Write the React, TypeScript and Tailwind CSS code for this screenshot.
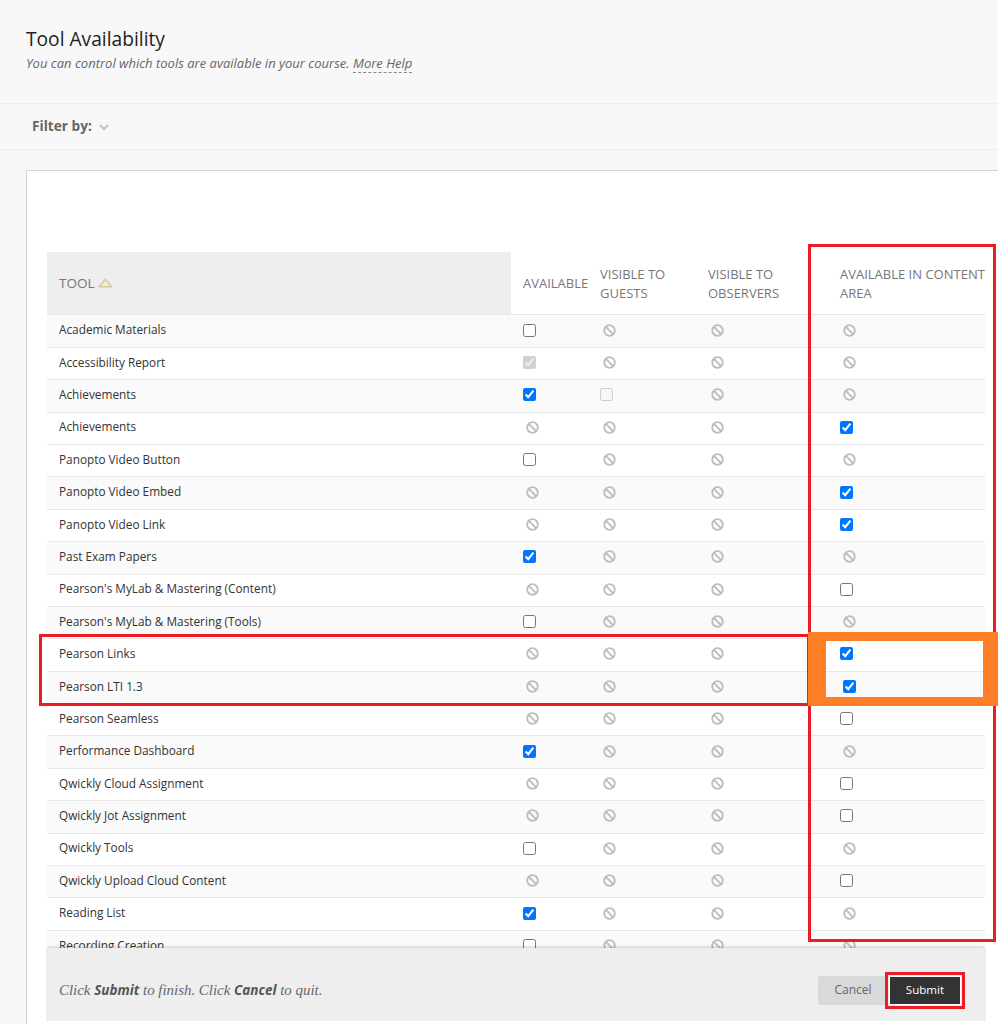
import React from 'react';

type Cell = 'empty' | 'checked' | 'no' | 'lockedOn' | 'lockedOff';

const rows: { name: string; cells: Cell[] }[] = [
  { name: 'Academic Materials', cells: ['empty', 'no', 'no', 'no'] },
  { name: 'Accessibility Report', cells: ['lockedOn', 'no', 'no', 'no'] },
  { name: 'Achievements', cells: ['checked', 'lockedOff', 'no', 'no'] },
  { name: 'Achievements', cells: ['no', 'no', 'no', 'checked'] },
  { name: 'Panopto Video Button', cells: ['empty', 'no', 'no', 'no'] },
  { name: 'Panopto Video Embed', cells: ['no', 'no', 'no', 'checked'] },
  { name: 'Panopto Video Link', cells: ['no', 'no', 'no', 'checked'] },
  { name: 'Past Exam Papers', cells: ['checked', 'no', 'no', 'no'] },
  { name: "Pearson's MyLab & Mastering (Content)", cells: ['no', 'no', 'no', 'empty'] },
  { name: "Pearson's MyLab & Mastering (Tools)", cells: ['empty', 'no', 'no', 'no'] },
  { name: 'Pearson Links', cells: ['no', 'no', 'no', 'checked'] },
  { name: 'Pearson LTI 1.3', cells: ['no', 'no', 'no', 'checked'] },
  { name: 'Pearson Seamless', cells: ['no', 'no', 'no', 'empty'] },
  { name: 'Performance Dashboard', cells: ['checked', 'no', 'no', 'no'] },
  { name: 'Qwickly Cloud Assignment', cells: ['no', 'no', 'no', 'empty'] },
  { name: 'Qwickly Jot Assignment', cells: ['no', 'no', 'no', 'empty'] },
  { name: 'Qwickly Tools', cells: ['empty', 'no', 'no', 'no'] },
  { name: 'Qwickly Upload Cloud Content', cells: ['no', 'no', 'no', 'empty'] },
  { name: 'Reading List', cells: ['checked', 'no', 'no', 'no'] },
  { name: 'Recording Creation', cells: ['empty', 'no', 'no', 'no'] },
];

function NoIcon() {
  return (
    <svg viewBox="0 0 13 13" className="ml-[3px] block h-[13px] w-[13px]" fill="none" stroke="#bcbcbc" strokeWidth="1.8">
      <circle cx="6.5" cy="6.5" r="5.3" />
      <path d="M2.7 2.7l7.6 7.6" />
    </svg>
  );
}

function ToolCell({ cell }: { cell: Cell }) {
  if (cell === 'no') return <NoIcon />;
  return (
    <input
      type="checkbox"
      readOnly
      checked={cell === 'checked' || cell === 'lockedOn'}
      disabled={cell === 'lockedOn' || cell === 'lockedOff'}
      className="block h-[13px] w-[13px]"
    />
  );
}

export default function App() {
  return (
    <div className="relative h-[1024px] w-[998px] overflow-hidden bg-[#f8f8f8] font-['Open_Sans',sans-serif]">
      {/* Page title */}
      <div className="h-[104px] border-b border-[#ececec] pl-[26px] pt-[25px]">
        <h1 className="text-[19.2px] leading-[27px] text-[#222]">Tool Availability</h1>
        <p className="text-[13.03px] leading-[23px] text-[#666] italic">
          You can control which tools are available in your course.{' '}
          <a className="border-b border-dashed border-[#888]">More Help</a>
        </p>
      </div>

      {/* Filter */}
      <div className="flex h-[46px] items-center gap-[7px] border-b border-[#ececec] pl-[32px]">
        <span className="text-[13.65px] font-bold text-[#666]">Filter by:</span>
        <svg viewBox="0 0 10 7" className="mt-[2px] h-[7px] w-[10px]" fill="none" stroke="#c4c4c4" strokeWidth="2">
          <path d="M1 1l4 4 4-4" />
        </svg>
      </div>

      {/* Card */}
      <div className="ml-[26px] mt-[20px] h-[900px] w-[1000px] border border-[#d4d4d4] bg-white pl-[20px] pt-[81px]">
        <div className="w-[938px]">
          <div className="grid h-[62.4px] grid-cols-[464px_77px_108px_132px_157px] items-center whitespace-nowrap text-[13px] leading-[19px] text-[#777]">
            <div className="flex h-full items-center gap-1 bg-[#eeeeee] pl-3 text-[13.5px]">
              TOOL
              <svg viewBox="0 0 15 10" className="h-[10px] w-[15px]">
                <path d="M7.5 1.2L13.8 8.8H1.2z" fill="#f5edc9" stroke="#d2c9a4" strokeWidth="1.4" strokeLinejoin="round" />
              </svg>
            </div>
            <div className="pl-3 pt-[1px]">AVAILABLE</div>
            <div className="pl-3 pt-[2px]">
              VISIBLE TO
              <br />
              GUESTS
            </div>
            <div className="pl-3 pt-[2px]">
              VISIBLE TO
              <br />
              OBSERVERS
            </div>
            <div className="pl-3 pt-[2px]">
              AVAILABLE IN CONTENT
              <br />
              AREA
            </div>
          </div>
          {rows.map((row, i) => (
            <div
              key={i}
              // the zebra flips after the fourth row in the picture
              className={`grid h-[32.4px] grid-cols-[464px_77px_108px_132px_157px] items-center border-t border-[#e8e8e8] pb-[2px] text-[11.8px] text-[#333] ${
                i < 4 === (i % 2 === 0) ? 'bg-[#fafafa]' : 'bg-white'
              }`}
            >
              <div className="pl-3">{row.name}</div>
              {row.cells.map((cell, j) => (
                <div key={j} className={row.name === 'Pearson LTI 1.3' && cell === 'checked' ? 'pl-[15px]' : 'pl-3'}>
                  <ToolCell cell={cell} />
                </div>
              ))}
            </div>
          ))}
        </div>
      </div>

      {/* Sticky submit bar */}
      <div className="absolute left-[46px] top-[948px] flex h-[73px] w-[940px] items-center justify-between bg-[#eeeeee] pl-[13px] pr-[25px] pt-[11px] shadow-[0_-3px_3px_-2px_rgba(0,0,0,0.2)]">
        <p className="font-['Liberation_Serif',serif] text-[14.9px] text-[#666] italic">
          Click <b className="font-['Open_Sans',sans-serif] text-[13.5px] text-[#555]">Submit</b> to finish. Click{' '}
          <b className="font-['Open_Sans',sans-serif] text-[13.5px] text-[#555]">Cancel</b> to quit.
        </p>
        <div className="flex">
          <button className="h-[29px] w-[70px] rounded-[2px] bg-[#d9d9d9] text-[12px] text-[#666]">Cancel</button>
          <button className="ml-[1px] h-[29px] w-[72px] border border-white bg-[#333] text-[11.6px] text-white">Submit</button>
        </div>
      </div>

      {/* Screenshot annotations */}
      <div className="absolute left-[808px] top-[244px] h-[698px] w-[188px] border-[3px] border-[#ed1c24]" />
      <div className="absolute left-[39px] top-[634px] h-[72px] w-[771px] border-[3px] border-[#ed1c24]" />
      <div className="absolute left-[808px] top-[632px] h-[74px] w-[190px] border-y-[9px] border-l-[18px] border-r-[15px] border-[#ff7f27]" />
      <div className="absolute left-[885px] top-[972px] h-[37px] w-[80px] border-[3px] border-[#ed1c24]" />
    </div>
  );
}
